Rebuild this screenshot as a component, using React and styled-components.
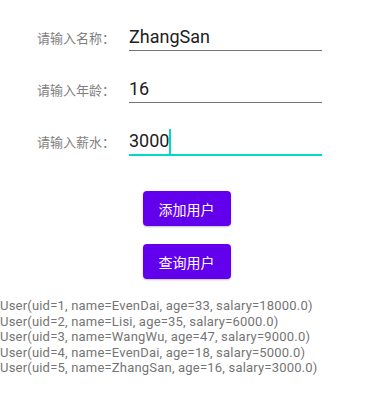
import React from 'react';
import styled, { createGlobalStyle } from 'styled-components';

const GlobalStyle = createGlobalStyle`
  html, body {
    margin: 0;
    padding: 0;
    background: #ffffff;
  }
  body {
    font-family: Roboto, "Noto Sans CJK SC", sans-serif;
  }
`;

const Page = styled.div`
  width: 373px;
  height: 408px;
  padding-top: 17px;
  box-sizing: border-box;
  background: #ffffff;
`;

const Form = styled.div`
  display: flex;
  flex-direction: column;
  gap: 18px;
`;

const Row = styled.div`
  display: flex;
  align-items: baseline;
  padding-left: 37px;
`;

const Label = styled.div`
  width: 92px;
  font-size: 13px;
  color: #7f7f7f;
  font-family: Roboto, "Noto Sans CJK SC", sans-serif;
`;

const Field = styled.div`
  width: 193px;
  height: 31px;
  padding-bottom: 2px;
  display: flex;
  align-items: flex-end;
  border-bottom: ${(p) => (p.$focused ? '2px solid #03dac5' : '1px solid #757575')};
`;

const Value = styled.span`
  position: relative;
  display: inline-block;
  font-size: 18px;
  line-height: 22px;
  color: #212121;
`;

const Caret = styled.span`
  position: absolute;
  right: -2px;
  top: -1px;
  width: 2px;
  height: 25px;
  background: #03dac5;
`;

const Actions = styled.div`
  display: flex;
  flex-direction: column;
  align-items: center;
  gap: 18px;
  margin-top: 35px;
`;

const Button = styled.button`
  width: 88px;
  height: 35px;
  border: none;
  border-radius: 4px;
  background: #6200ee;
  color: #ffffff;
  font-size: 14px;
  font-family: Roboto, "Noto Sans CJK SC", sans-serif;
  box-shadow: 0 1px 2px rgba(0, 0, 0, 0.25);
  padding: 0;
`;

const Output = styled.div`
  margin-top: 19px;
  font-size: 13px;
  letter-spacing: 0.2px;
  color: #757575;
  font-family: Roboto, sans-serif;
  line-height: 15.5px;
`;

const fields = [
  { label: '请输入名称：', value: 'ZhangSan' },
  { label: '请输入年龄：', value: '16' },
  { label: '请输入薪水：', value: '3000', focused: true },
];

const users = [
  'User(uid=1, name=EvenDai, age=33, salary=18000.0)',
  'User(uid=2, name=Lisi, age=35, salary=6000.0)',
  'User(uid=3, name=WangWu, age=47, salary=9000.0)',
  'User(uid=4, name=EvenDai, age=18, salary=5000.0)',
  'User(uid=5, name=ZhangSan, age=16, salary=3000.0)',
];

const App = () => {
  return (
    <Page>
      <GlobalStyle />
      <Form>
        {fields.map((f) => (
          <Row key={f.label}>
            <Label>{f.label}</Label>
            <Field $focused={f.focused}>
              <Value>
                {f.value}
                {f.focused && <Caret />}
              </Value>
            </Field>
          </Row>
        ))}
      </Form>
      <Actions>
        <Button>添加用户</Button>
        <Button>查询用户</Button>
      </Actions>
      <Output>
        {users.map((u) => (
          <div key={u}>{u}</div>
        ))}
      </Output>
    </Page>
  );
};

export default App;
